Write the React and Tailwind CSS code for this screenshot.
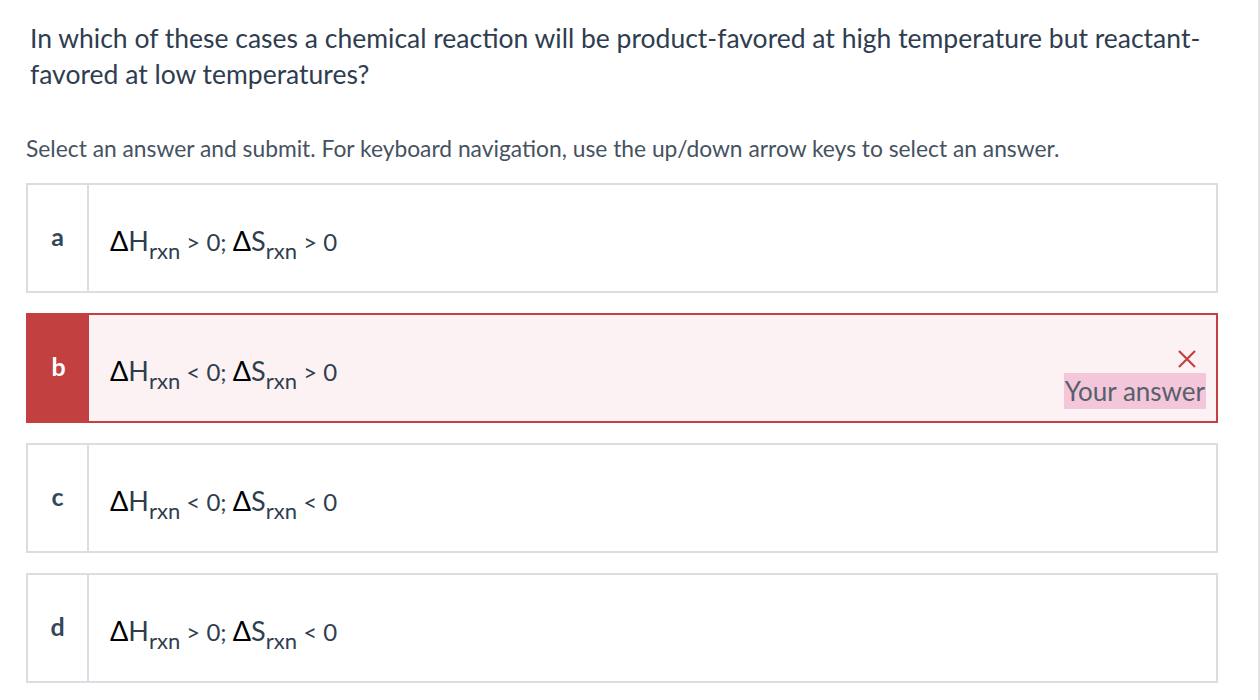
import React from 'react';

const options = [
  { key: 'a', h: '>', s: '>' },
  { key: 'b', h: '<', s: '>', wrong: true },
  { key: 'c', h: '<', s: '<' },
  { key: 'd', h: '>', s: '<' },
];

function Formula({ h, s }) {
  return (
    <span className="text-[27px] leading-none text-[#2f3e4e] whitespace-nowrap">
      <span className="text-black">Δ</span>H<sub className="text-[22px] relative top-[1px] align-sub leading-none">rxn</sub>
      <span className="text-[24px]"> {h} 0; </span>
      <span className="text-black">Δ</span>S<sub className="text-[22px] relative top-[1px] align-sub leading-none">rxn</sub>
      <span className="text-[24px]"> {s} 0</span>
    </span>
  );
}

function Option({ opt }) {
  const wrong = opt.wrong;
  return (
    <div
      className={
        'flex h-[110px] border-2 ' +
        (wrong ? 'border-[#c24040] bg-[#fcf2f3]' : 'border-[#dadee2] bg-white')
      }
    >
      <div
        className={
          'w-[61px] flex items-center justify-center text-[25px] font-bold ' +
          (wrong ? 'bg-[#c24040] text-white' : 'border-r-2 border-[#dadee2] text-[#34475a]')
        }
      >
        <span className="-mt-[2px]">{opt.key}</span>
      </div>
      <div className="flex-1 flex items-center pl-[21px] pr-[10px]">
        <div className="flex-1 mt-[12px]">
          <Formula h={opt.h} s={opt.s} />
        </div>
        {wrong && (
          <div className="flex flex-col items-end pt-[22px]">
            <svg width="20" height="20" viewBox="0 0 20 20" className="mr-[9px] mb-[4px]">
              <path d="M2 2 L18 18 M18 2 L2 18" stroke="#c24040" strokeWidth="2.2" />
            </svg>
            <span className="bg-[#f4c6da] text-[#56616c] text-[26px] leading-[36px] px-[1px]">Your answer</span>
          </div>
        )}
      </div>
    </div>
  );
}

export default function App() {
  return (
    <div
      className="w-full h-[700px] bg-white border-r-2 border-[#e4e4e4] overflow-hidden"
      style={{ fontFamily: 'Lato, "Open Sans", sans-serif' }}
    >
      <div className="pl-[26px] pr-[40px] pt-[20px]">
        <p className="pl-[4px] text-[26.5px] leading-[36px] text-[#2e3d4f]">
          In which of these cases a chemical reaction will be product-favored at high temperature but reactant-
          <br />
          favored at low temperatures?
        </p>
        <p className="mt-[41px] text-[22.8px] leading-[30px] text-[#46525f]">
          Select an answer and submit. For keyboard navigation, use the up/down arrow keys to select an answer.
        </p>
        <div className="mt-[20px] w-[1192px] flex flex-col gap-[20px]">
          {options.map((o) => (
            <Option key={o.key} opt={o} />
          ))}
        </div>
      </div>
    </div>
  );
}
